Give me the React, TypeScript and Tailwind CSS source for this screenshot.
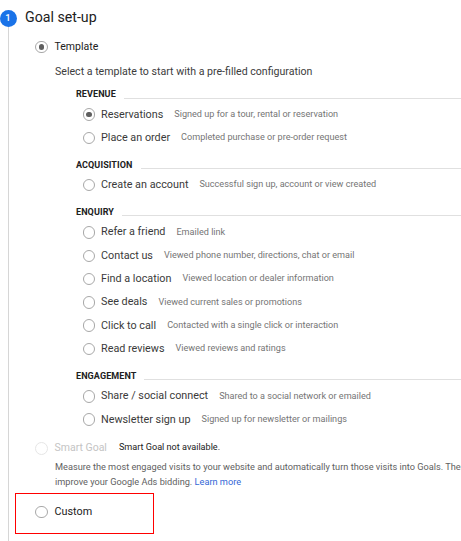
import React from 'react';

type Option = { label: string; desc: string; checked?: boolean };
type Section = { title: string; options: Option[] };

const sections: Section[] = [
  {
    title: 'Revenue',
    options: [
      { label: 'Reservations', desc: 'Signed up for a tour, rental or reservation', checked: true },
      { label: 'Place an order', desc: 'Completed purchase or pre-order request' },
    ],
  },
  {
    title: 'Acquisition',
    options: [{ label: 'Create an account', desc: 'Successful sign up, account or view created' }],
  },
  {
    title: 'Enquiry',
    options: [
      { label: 'Refer a friend', desc: 'Emailed link' },
      { label: 'Contact us', desc: 'Viewed phone number, directions, chat or email' },
      { label: 'Find a location', desc: 'Viewed location or dealer information' },
      { label: 'See deals', desc: 'Viewed current sales or promotions' },
      { label: 'Click to call', desc: 'Contacted with a single click or interaction' },
      { label: 'Read reviews', desc: 'Viewed reviews and ratings' },
    ],
  },
  {
    title: 'Engagement',
    options: [
      { label: 'Share / social connect', desc: 'Shared to a social network or emailed' },
      { label: 'Newsletter sign up', desc: 'Signed up for newsletter or mailings' },
    ],
  },
];

const Radio: React.FC<{ checked?: boolean; disabled?: boolean }> = ({ checked, disabled }) => (
  <span
    className={`flex h-[12.5px] w-[12.5px] shrink-0 items-center justify-center rounded-full border ${
      disabled ? 'border-[#e6e6e6]' : 'border-[#a8a8a8]'
    }`}
  >
    {checked && <span className="h-[5.5px] w-[5.5px] rounded-full bg-[#5f5f5f]" />}
  </span>
);

export default function App() {
  return (
    <div
      className="flex h-[541px] w-[461px] overflow-hidden bg-white text-[#212121]"
      style={{ fontFamily: 'Roboto, "Liberation Sans", sans-serif' }}
    >
      {/* step rail */}
      <div className="flex w-[16px] shrink-0 flex-col items-center">
        <div className="mt-[9.5px] flex h-[17px] w-[17px] shrink-0 items-center justify-center rounded-full bg-[#1a73e8] text-[9.5px] font-medium text-white">
          1
        </div>
        <div className="w-px flex-1 bg-[#d6d6d6]" />
      </div>

      <div className="flex min-w-0 flex-1 flex-col">
        <div className="flex h-[36px] items-center pl-[9px] text-[14.2px] text-[#212121]">Goal set-up</div>

        <div className="flex h-[22px] items-center gap-[7px] pl-[19px] text-[10.5px] text-[#212121]">
          <Radio checked />
          <span>Template</span>
        </div>

        <div className="mt-[5px] flex h-[18px] items-center whitespace-nowrap pl-[39px] text-[10.6px] text-[#3c3c3c]">
          Select a template to start with a pre-filled configuration
        </div>

        <div className="mt-[6px] flex flex-col">
          {sections.map((s, i) => (
            <div key={s.title} className={i > 0 ? 'mt-[8px]' : ''}>
              <div className="flex h-[16px] items-center pl-[60px]">
                <span className="text-[9px] font-bold uppercase tracking-[0.1px] text-[#212121]">{s.title}</span>
                <div className="ml-[8px] mt-[6px] h-px flex-1 bg-[#e0e0e0]" />
              </div>
              {s.options.map((o) => (
                <div key={o.label} className="flex h-[23.3px] items-center whitespace-nowrap pl-[66.5px]">
                  <Radio checked={o.checked} />
                  <span className="ml-[6px] text-[10.8px] text-[#3a3a3a]">{o.label}</span>
                  <span className="ml-[11px] text-[9.1px] text-[#757575]">{o.desc}</span>
                </div>
              ))}
            </div>
          ))}
        </div>

        <div className="mt-[6px] flex h-[22px] items-center whitespace-nowrap pl-[19px]">
          <Radio disabled />
          <span className="ml-[7px] text-[10.5px] text-[#c4c4c4]">Smart Goal</span>
          <span className="ml-[12px] text-[9.1px] text-[#212121]">Smart Goal not available.</span>
        </div>
        <div className="whitespace-nowrap pl-[39px] text-[9.2px] leading-[15px] text-[#616161]">
          <div>
            Measure the most engaged visits to your website and automatically turn those visits into Goals. Then use
            those Goals to
          </div>
          <div>
            improve your Google Ads bidding. <span className="text-[#3367d6]">Learn more</span>
          </div>
        </div>

        {/* highlighted option */}
        <div className="-ml-px mt-[3.5px] flex h-[41px] w-[139px] items-center gap-[7px] border border-[#f00] pb-[3px] pl-[19px]">
          <Radio />
          <span className="text-[10.8px] text-[#212121]">Custom</span>
        </div>
      </div>
    </div>
  );
}
